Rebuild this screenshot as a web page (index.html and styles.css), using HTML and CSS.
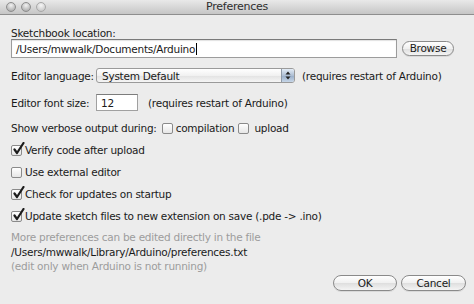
FILE: index.html
```html
<!DOCTYPE html>
<html>
<head>
<meta charset="utf-8">
<link rel="stylesheet" href="styles.css">
</head>
<body>
<div class="window">
  <div class="titlebar">
    <div class="lights"><span class="light"></span><span class="light"></span><span class="light"></span></div>
    <div class="title">Preferences</div>
  </div>
  <div class="content">
    <div class="row label-row">Sketchbook location:</div>
    <div class="row field-row">
      <div class="textfield">/Users/mwwalk/Documents/Arduino<span class="caret"></span></div>
      <button class="btn browse">Browse</button>
    </div>
    <div class="row lang-row">
      <span class="lbl">Editor language:</span>
      <div class="popup"><span class="popup-text">System Default</span><span class="stepper"><svg width="12" height="13" viewBox="0 0 12 13"><path d="M6 2.5 L8.5 5.5 L3.5 5.5 Z" fill="#222"/><path d="M6 10.5 L8.5 7.5 L3.5 7.5 Z" fill="#222"/></svg></span></div>
      <span class="note">(requires restart of Arduino)</span>
    </div>
    <div class="row font-row">
      <span class="lbl">Editor font size:</span>
      <div class="numfield">12</div>
      <span class="note wide">(requires restart of Arduino)</span>
    </div>
    <div class="row chk-row verbose">
      <span>Show verbose output during:</span>
      <span class="cb gap-l"></span><span class="cb-text">compilation</span>
      <span class="cb gap-l2"></span><span class="cb-text2">upload</span>
    </div>
    <div class="row chk-row"><span class="cb checked"><svg width="13" height="14" viewBox="0 0 13 14"><path d="M2.5 7.5 L5 11 L11.5 1" fill="none" stroke="#1c1c1c" stroke-width="2.2" stroke-linecap="round" stroke-linejoin="round"/></svg></span><span class="cb-text">Verify code after upload</span></div>
    <div class="row chk-row"><span class="cb"></span><span class="cb-text">Use external editor</span></div>
    <div class="row chk-row"><span class="cb checked"><svg width="13" height="14" viewBox="0 0 13 14"><path d="M2.5 7.5 L5 11 L11.5 1" fill="none" stroke="#1c1c1c" stroke-width="2.2" stroke-linecap="round" stroke-linejoin="round"/></svg></span><span class="cb-text">Check for updates on startup</span></div>
    <div class="row chk-row"><span class="cb checked"><svg width="13" height="14" viewBox="0 0 13 14"><path d="M2.5 7.5 L5 11 L11.5 1" fill="none" stroke="#1c1c1c" stroke-width="2.2" stroke-linecap="round" stroke-linejoin="round"/></svg></span><span class="cb-text">Update sketch files to new extension on save (.pde -&gt; .ino)</span></div>
    <div class="info">
      <div class="gray">More preferences can be edited directly in the file</div>
      <div class="path">/Users/mwwalk/Library/Arduino/preferences.txt</div>
      <div class="gray">(edit only when Arduino is not running)</div>
    </div>
    <div class="buttons">
      <button class="btn big">OK</button>
      <button class="btn big">Cancel</button>
    </div>
  </div>
</div>
</body>
</html>
```
FILE: styles.css
```css
html, body {
  margin: 0;
  padding: 0;
  width: 474px;
  height: 304px;
  overflow: hidden;
  background: #ececec;
}
.window {
  width: 474px;
  height: 304px;
  font-family: "DejaVu Sans", "Open Sans", sans-serif;
  font-size: 10.5px;
  letter-spacing: -0.25px;
  color: #1a1a1a;
  display: flex;
  flex-direction: column;
}
.titlebar {
  height: 14px;
  border-bottom: 1px solid #8e8e8e;
  background: linear-gradient(#e9e9e9, #c6c6c6);
  display: flex;
  align-items: center;
  position: relative;
}
.lights {
  display: flex;
  gap: 5px;
  padding-left: 6px;
}
.light {
  width: 10px;
  height: 10px;
  border-radius: 50%;
  box-sizing: border-box;
  border: 1px solid #8d8d8d;
  background: radial-gradient(circle at 50% 30%, #f2f2f2, #b8b8b8 70%, #9a9a9a);
}
.light:last-child {
  border-color: #a8a8a8;
  background: radial-gradient(circle at 50% 30%, #f6f6f6, #cfcfcf 70%, #bdbdbd);
}
.title {
  position: absolute;
  left: 0;
  right: 0;
  top: 0;
  height: 14px;
  line-height: 14px;
  text-align: center;
  font-size: 11px;
  color: #2e2e2e;
}
.content {
  padding: 12px 0 0 11px;
  display: flex;
  flex-direction: column;
}
.row {
  display: flex;
  align-items: center;
  white-space: nowrap;
}
.label-row {
  height: 12px;
}
.field-row {
  height: 19px;
}
.textfield {
  box-sizing: border-box;
  width: 386px;
  height: 19px;
  background: #fff;
  border: 1px solid #9c9c9c;
  border-top-color: #7a7a7a;
  box-shadow: inset 0 1px 1px rgba(0,0,0,0.12);
  padding-left: 4px;
  display: flex;
  align-items: center;
}
.caret {
  display: inline-block;
  width: 1px;
  height: 12px;
  background: #000;
  margin-left: 1px;
}
.btn {
  font-family: inherit;
  letter-spacing: inherit;
  color: #1a1a1a;
  box-sizing: border-box;
  border: 1px solid #8a8a8a;
  border-radius: 8px;
  background: linear-gradient(#ffffff, #f0f0f0 50%, #dedede 51%, #f4f4f4);
  padding: 0;
  margin: 0;
  box-shadow: 0 1px 0 rgba(0,0,0,0.08);
}
.browse {
  margin-left: 5px;
  width: 52px;
  height: 15px;
  font-size: 10.5px;
  line-height: 13px;
}
.lang-row {
  height: 15px;
  margin-top: 10px;
}
.lbl {
  width: 85px;
}
.popup {
  box-sizing: border-box;
  width: 199px;
  height: 15px;
  border: 1px solid #9a9a9a;
  border-radius: 3px;
  background: linear-gradient(#ffffff, #f1f1f1 50%, #e2e2e2 51%, #f5f5f5);
  display: flex;
  align-items: center;
  overflow: hidden;
}
.popup-text {
  flex: 1;
  padding-left: 5px;
}
.stepper {
  width: 12px;
  height: 13px;
  border-left: 1px solid #8f9aa8;
  background: linear-gradient(#e3ecf6, #aebfd4 50%, #97adc8 51%, #c7d6e8);
  display: flex;
}
.note {
  margin-left: 7px;
}
.font-row {
  height: 17px;
  margin-top: 11px;
}
.numfield {
  box-sizing: border-box;
  width: 42px;
  height: 17px;
  background: #fff;
  border: 1px solid #a0a0a0;
  border-top-color: #7c7c7c;
  padding-left: 4px;
  display: flex;
  align-items: center;
}
.note.wide {
  margin-left: 10px;
}
.chk-row {
  height: 22px;
}
.verbose {
  margin-top: 6px;
}
.cb {
  box-sizing: border-box;
  width: 11px;
  height: 11px;
  border: 1px solid #8a8a8a;
  border-radius: 2px;
  background: linear-gradient(#ffffff, #e6e6e6);
  position: relative;
  flex: none;
}
.cb svg {
  position: absolute;
  left: 0;
  top: -4px;
}
.cb-text {
  margin-left: 3px;
}
.gap-l {
  margin-left: 5px;
}
.gap-l2 {
  margin-left: 4px;
}
.cb-text2 {
  margin-left: 5px;
}
.info {
  margin-top: 3px;
  line-height: 14.5px;
}
.gray {
  color: #9c9c9c;
}
.buttons {
  display: flex;
  justify-content: flex-end;
  gap: 4px;
  padding-right: 8px;
  margin-top: 1px;
}
.big {
  height: 16px;
  font-size: 10.5px;
  line-height: 14px;
}
.big:first-child {
  width: 64px;
}
.big:last-child {
  width: 65px;
}
```
